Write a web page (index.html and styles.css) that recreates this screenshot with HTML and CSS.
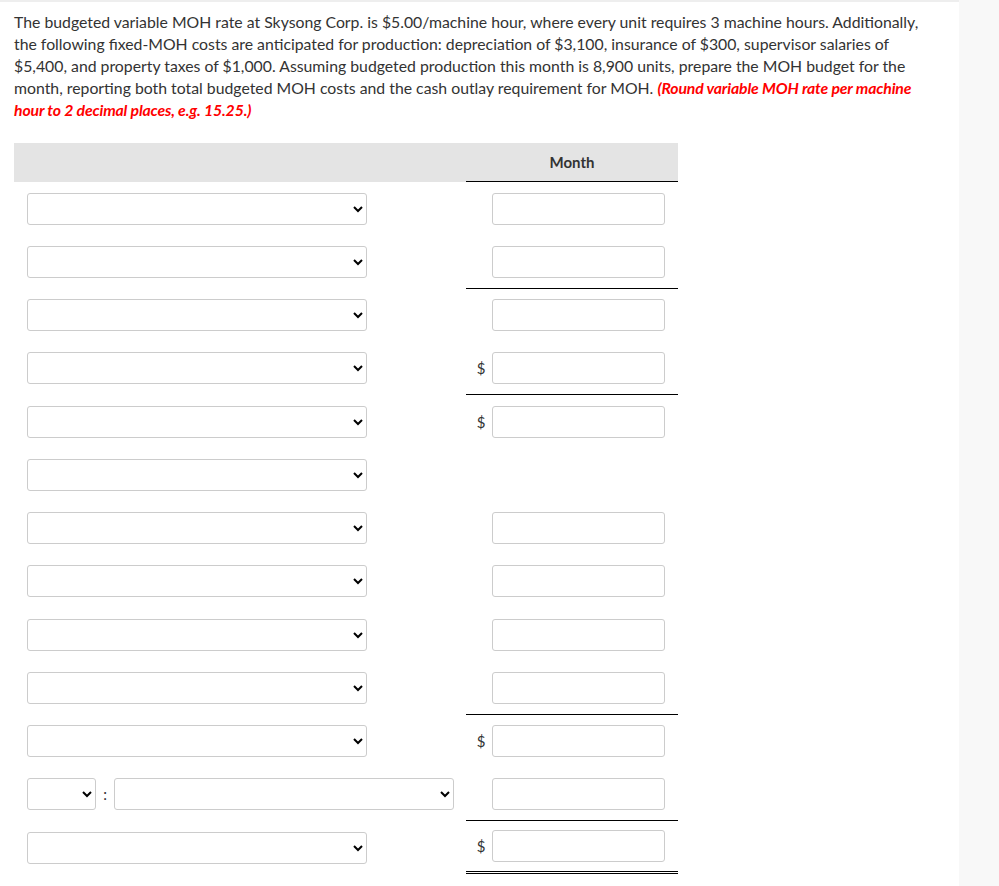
FILE: index.html
```html
<!DOCTYPE html>
<html lang="en">
<head>
    <meta charset="UTF-8">
    <meta name="viewport" content="width=device-width, initial-scale=1.0">
    <title>MOH Budget</title>
    <link rel="stylesheet" href="styles.css">
</head>
<body>
    <div class="page">
        <p class="question">
            The budgeted variable MOH rate at Skysong Corp. is $5.00/machine hour, where every unit requires 3 machine hours. Additionally, the following fixed-MOH costs are anticipated for production: depreciation of $3,100, insurance of $300, supervisor salaries of $5,400, and property taxes of $1,000. Assuming budgeted production this month is 8,900 units, prepare the MOH budget for the month, reporting both total budgeted MOH costs and the cash outlay requirement for MOH.
            <span class="hint">(Round variable MOH rate per machine hour to 2 decimal places, e.g. 15.25.)</span>
        </p>

        <div class="budget">
            <div class="budget-head">
                <div class="label-col"></div>
                <div class="amount-col rule">Month</div>
            </div>

            <div class="budget-row">
                <div class="label-col"><select class="item-select"></select></div>
                <div class="amount-col"><span class="cur"></span><input type="text" class="amount"></div>
            </div>
            <div class="budget-row">
                <div class="label-col"><select class="item-select"></select></div>
                <div class="amount-col rule"><span class="cur"></span><input type="text" class="amount"></div>
            </div>
            <div class="budget-row">
                <div class="label-col"><select class="item-select"></select></div>
                <div class="amount-col"><span class="cur"></span><input type="text" class="amount"></div>
            </div>
            <div class="budget-row">
                <div class="label-col"><select class="item-select"></select></div>
                <div class="amount-col rule"><span class="cur">$</span><input type="text" class="amount"></div>
            </div>
            <div class="budget-row">
                <div class="label-col"><select class="item-select"></select></div>
                <div class="amount-col"><span class="cur">$</span><input type="text" class="amount"></div>
            </div>
            <div class="budget-row">
                <div class="label-col"><select class="item-select"></select></div>
                <div class="amount-col"></div>
            </div>
            <div class="budget-row">
                <div class="label-col"><select class="item-select"></select></div>
                <div class="amount-col"><span class="cur"></span><input type="text" class="amount"></div>
            </div>
            <div class="budget-row">
                <div class="label-col"><select class="item-select"></select></div>
                <div class="amount-col"><span class="cur"></span><input type="text" class="amount"></div>
            </div>
            <div class="budget-row">
                <div class="label-col"><select class="item-select"></select></div>
                <div class="amount-col"><span class="cur"></span><input type="text" class="amount"></div>
            </div>
            <div class="budget-row">
                <div class="label-col"><select class="item-select"></select></div>
                <div class="amount-col rule"><span class="cur"></span><input type="text" class="amount"></div>
            </div>
            <div class="budget-row">
                <div class="label-col"><select class="item-select"></select></div>
                <div class="amount-col"><span class="cur">$</span><input type="text" class="amount"></div>
            </div>
            <div class="budget-row">
                <div class="label-col">
                    <select class="small-select"></select>
                    <span class="colon">:</span>
                    <select class="item-select"></select>
                </div>
                <div class="amount-col rule"><span class="cur"></span><input type="text" class="amount"></div>
            </div>
            <div class="budget-row">
                <div class="label-col"><select class="item-select"></select></div>
                <div class="amount-col total"><span class="cur">$</span><input type="text" class="amount"></div>
            </div>
        </div>
    </div>
</body>
</html>
```

FILE: styles.css
```css
body {
    margin: 0;
    background-color: #f8f8f8;
    font-family: Lato, "Open Sans", Arial, sans-serif;
    color: #333;
}
.page {
    width: 959px;
    min-height: 100vh;
    background-color: white;
    border-top: 2px solid #eeeeee;
    padding-left: 14px;
    box-sizing: border-box;
}
.question {
    margin: 9px 0 0;
    width: 920px;
    font-size: 15.8px;
    line-height: 22px;
}
.hint {
    color: #f00;
    font-weight: bold;
    font-style: italic;
    letter-spacing: -0.15px;
}
.budget {
    margin-top: 22px;
    width: 664px;
}
.budget-head {
    display: flex;
    height: 39px;
    background-color: #e4e4e4;
}
.budget-head .amount-col {
    justify-content: center;
    font-weight: bold;
    font-size: 15px;
    padding-bottom: 1px;
    box-sizing: border-box;
}
.budget-row {
    display: flex;
    height: 53.25px;
}
.label-col {
    width: 452px;
    padding-left: 13px;
    display: flex;
    align-items: center;
    box-sizing: border-box;
}
.amount-col {
    width: 212px;
    display: flex;
    align-items: center;
}
.rule {
    box-shadow: inset 0 -1px 0 #000;
}
.total {
    border-bottom: 3px double #000;
}
.cur {
    width: 26px;
    text-align: center;
    padding-left: 4px;
    box-sizing: border-box;
    font-size: 15px;
}
select,
input {
    height: 32px;
    box-sizing: border-box;
    border: 1px solid #ccc;
    border-radius: 3px;
    background-color: white;
    font-family: inherit;
    font-size: 14px;
}
.item-select {
    width: 340px;
}
.small-select {
    width: 69px;
}
.colon {
    width: 18px;
    text-align: center;
    font-size: 15px;
}
.amount {
    width: 173px;
    padding: 4px 6px;
}
```
